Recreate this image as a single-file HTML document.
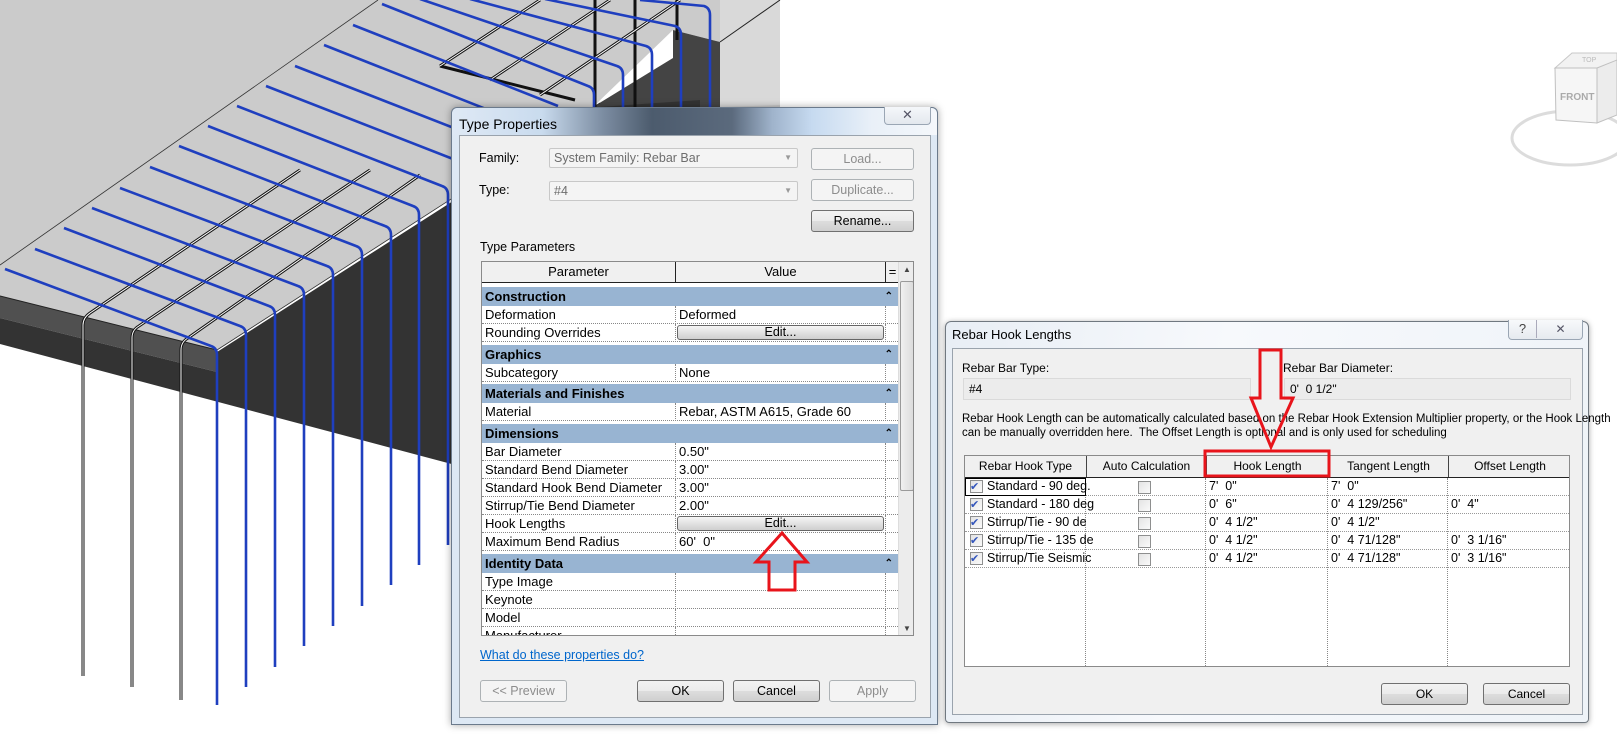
<!DOCTYPE html>
<html><head><meta charset="utf-8">
<style>
*{margin:0;padding:0;box-sizing:border-box}
body{width:1617px;height:753px;overflow:hidden;background:#fff;position:relative;font-family:"Liberation Sans",sans-serif;color:#000}
.a{position:absolute}
.t{position:absolute;white-space:nowrap;font-size:12.5px;line-height:14px}
.btn{position:absolute;border:1px solid #707070;border-radius:3px;background:linear-gradient(#f2f2f2,#ebebeb 50%,#dddddd 51%,#cfcfcf);font-size:12.5px;text-align:center;white-space:nowrap}
.btn.dis{border-color:#adb2b5;background:#f4f4f4;color:#8d8d8d}
.combo{position:absolute;border:1px solid #c8c8c8;background:#f4f4f4;color:#6d6d6d;font-size:12.5px;padding-left:4px;border-radius:2px}
.row{position:absolute;left:0;width:416px;height:18px;background:#fff;border-bottom:1px dotted #888;font-size:13px;line-height:17px}
.row span{position:absolute;left:3px}
.row b{position:absolute;left:197px;font-weight:normal}
.row i{position:absolute;left:193px;top:0;height:18px;border-left:1px dotted #888}
.row u{position:absolute;left:403px;top:0;height:18px;border-left:1px dotted #888}
.grp{position:absolute;left:0;width:416px;height:19px;background:#98b4d2;font-size:13px;font-weight:bold;line-height:19px;padding-left:3px}
.grp em{position:absolute;right:5px;font-style:normal;font-size:10px;font-weight:bold}
.ed{position:absolute;left:195px;top:1px;width:207px;height:15px;border:1px solid #666;border-radius:3px;background:linear-gradient(#f6f6f6,#e2e2e2 50%,#cfcfcf);text-align:center;font-size:12.5px;line-height:13px}
.hr{position:absolute;left:0;width:606px;height:18px;font-size:12.5px;line-height:17px;border-bottom:1px dotted #999}
.hr span{position:absolute}
.cb{position:absolute;width:13px;height:13px;border:1px solid #8e8f8f;background:linear-gradient(135deg,#e4e4e4,#fafafa)}
</style></head><body>

<svg class="a" style="left:0;top:0" width="1617" height="753">
 <polygon points="0,0 780,0 780,110 720,110 720,42 673,30 593,107 217,350 0,296" fill="#cbcbcb"/>
 <polygon points="720,0 780,0 780,105 720,107" fill="#d9d9d9"/>
 <line x1="720" y1="42" x2="780" y2="0" stroke="#222" stroke-width="1"/>
 <line x1="0" y1="265" x2="378" y2="0" stroke="#333" stroke-width="0.8"/>
 <polygon points="593,107 673,58 673,30 720,42 720,107" fill="#444"/>
 <polygon points="0,296 217,350 217,372 0,318" fill="#505050"/>
 <polygon points="0,318 217,372 217,352 600,107 700,100 700,530 0,344" fill="#333"/>
 <line x1="0" y1="296" x2="217" y2="350" stroke="#222"/>
 <line x1="217" y1="350" x2="600" y2="103" stroke="#333" stroke-width="0.8"/>
 <g stroke="#111" stroke-width="3" fill="none">
  <path d="M83,676 V325 Q83,318 90,313 L300,170"/>
  <path d="M132,687 V338 Q132,330 139,326 L370,170"/>
  <path d="M181,700 V350 Q181,342 188,338 L420,175"/>
  <path d="M595,0 V110 M635,0 V110 M677,0 V40"/>
  <path d="M440,66 L540,0 M490,80 L610,0 M540,95 L680,0"/>
  <path d="M440,66 L575,100"/>
 </g>
 <g stroke="#fff" stroke-width="1" fill="none">
  <path d="M83,676 V325 Q83,318 90,313 L300,170"/>
  <path d="M132,687 V338 Q132,330 139,326 L370,170"/>
  <path d="M181,700 V350 Q181,342 188,338 L420,175"/>
  <path d="M440,66 L540,0 M490,80 L610,0 M540,95 L680,0"/>
 </g>
 <g stroke="#1f3fbf" stroke-width="2.6" fill="none">
  <path d="M5,269 L211,346 Q217,348 217,355 V705"/>
  <path d="M35,249 L240,326 Q246,328 246,335 V687"/>
  <path d="M64,228 L269,306 Q275,308 275,315 V667"/>
  <path d="M92,208 L298,286 Q304,288 304,295 V646"/>
  <path d="M120,188 L327,266 Q333,268 333,275 V626"/>
  <path d="M150,167 L356,246 Q362,248 362,255 V606"/>
  <path d="M179,146 L385,226 Q391,228 391,235 V585"/>
  <path d="M208,126 L413,206 Q419,208 419,215 V565"/>
  <path d="M237,106 L442,186 Q448,188 448,195 V545"/>
  <path d="M266,86 L471,166"/>
  <path d="M295,66 L500,146"/>
  <path d="M324,45 L529,126"/>
  <path d="M353,25 L558,106"/>
  <path d="M382,4 L588,86 Q594,88 594,95 V120"/>
  <path d="M420,-1 L617,66 Q623,68 623,75 V120"/>
  <path d="M470,-1 L646,46 Q652,48 652,55 V120"/>
  <path d="M545,-1 L675,26 Q681,28 681,35 V120"/>
  <path d="M640,0 L704,6 Q710,8 710,15 V120"/>
 </g>
 <g stroke="#dcdcdc" fill="none" stroke-width="3">
  <ellipse cx="1570" cy="138" rx="58" ry="27"/>
 </g>
 <polygon points="1555,68 1572,53 1617,53 1617,68 1597,68" fill="#f2f2f2" stroke="#c8c8c8"/>
 <polygon points="1555,68 1597,68 1597,123 1556,120" fill="#f6f6f6" stroke="#c0c0c0"/>
 <polygon points="1597,68 1617,60 1617,115 1597,123" fill="#ececec" stroke="#c0c0c0"/>
 <text x="1560" y="100" font-family="Liberation Sans" font-size="10" font-weight="bold" fill="#aaa">FRONT</text>
 <text x="1582" y="62" font-family="Liberation Sans" font-size="7" fill="#bbb">TOP</text>
</svg>

<div class="a" style="left:451px;top:107px;width:487px;height:618px;border:1px solid #6b7a8c;border-radius:6px 6px 0 0;background:#dde8f4;box-shadow:0 0 8px rgba(0,0,0,.35)"></div>
<div class="a" style="left:452px;top:108px;width:485px;height:27px;border-radius:6px 6px 0 0;background:linear-gradient(90deg,#dfe9f5 0,#c9dbee 90px,#7d8ea3 150px,#4c5b6d 200px,#5b6a7d 280px,#9fb3cb 320px,#c6daf0 360px,#e9f0f8 420px,#f4f7fb 485px)"></div>
<div class="t" style="left:459px;top:116px;font-size:14px;line-height:16px">Type Properties</div>
<div class="a" style="left:884px;top:107px;width:47px;height:18px;border:1px solid #9aa6b4;border-top:none;border-radius:0 0 4px 4px;background:linear-gradient(#f5f7fa,#e3e8ee);text-align:center;font-size:13px;line-height:16px;color:#556">✕</div>
<div class="a" style="left:459px;top:135px;width:472px;height:583px;background:#f0f0f0;border:1px solid #9aa3ad"></div>

<div class="t" style="left:479px;top:151px">Family:</div>
<div class="combo" style="left:549px;top:148px;width:249px;height:20px;line-height:18px">System Family: Rebar Bar<span style="position:absolute;right:5px;top:0;font-size:8px;color:#999">▼</span></div>
<div class="t" style="left:479px;top:183px">Type:</div>
<div class="combo" style="left:549px;top:181px;width:249px;height:20px;line-height:18px">#4<span style="position:absolute;right:5px;top:0;font-size:8px;color:#999">▼</span></div>
<div class="btn dis" style="left:811px;top:148px;width:103px;height:22px;line-height:20px">Load...</div>
<div class="btn dis" style="left:811px;top:179px;width:103px;height:22px;line-height:20px">Duplicate...</div>
<div class="btn" style="left:811px;top:210px;width:103px;height:22px;line-height:20px">Rename...</div>
<div class="t" style="left:480px;top:240px">Type Parameters</div>

<div class="a" style="left:481px;top:261px;width:433px;height:375px;border:1px solid #8a8a8a;background:#fff;overflow:hidden">
 <div class="a" style="left:0;top:0;width:416px;height:21px;background:#f0f0f0;border-bottom:1px solid #222;font-size:13px;line-height:20px">
  <div class="a" style="left:0;width:193px;text-align:center">Parameter</div>
  <div class="a" style="left:193px;width:211px;height:20px;text-align:center;border-left:1px solid #222;border-right:1px solid #222">Value</div>
  <div class="a" style="left:405px;width:11px;text-align:center">=</div>
 </div>
 <div class="grp" style="top:25px">Construction<em>⌃</em></div>
 <div class="row" style="top:44px"><span>Deformation</span><i></i><b>Deformed</b><u></u></div>
 <div class="row" style="top:62px"><span>Rounding Overrides</span><i></i><div class="ed">Edit...</div><u></u></div>
 <div class="grp" style="top:83px">Graphics<em>⌃</em></div>
 <div class="row" style="top:102px"><span>Subcategory</span><i></i><b>None</b><u></u></div>
 <div class="grp" style="top:122px">Materials and Finishes<em>⌃</em></div>
 <div class="row" style="top:141px"><span>Material</span><i></i><b>Rebar, ASTM A615, Grade 60</b><u></u></div>
 <div class="grp" style="top:162px">Dimensions<em>⌃</em></div>
 <div class="row" style="top:181px"><span>Bar Diameter</span><i></i><b>0.50"</b><u></u></div>
 <div class="row" style="top:199px"><span>Standard Bend Diameter</span><i></i><b>3.00"</b><u></u></div>
 <div class="row" style="top:217px"><span>Standard Hook Bend Diameter</span><i></i><b>3.00"</b><u></u></div>
 <div class="row" style="top:235px"><span>Stirrup/Tie Bend Diameter</span><i></i><b>2.00"</b><u></u></div>
 <div class="row" style="top:253px"><span>Hook Lengths</span><i></i><div class="ed">Edit...</div><u></u></div>
 <div class="row" style="top:271px"><span>Maximum Bend Radius</span><i></i><b>60'&nbsp; 0"</b><u></u></div>
 <div class="grp" style="top:292px">Identity Data<em>⌃</em></div>
 <div class="row" style="top:311px"><span>Type Image</span><i></i><u></u></div>
 <div class="row" style="top:329px"><span>Keynote</span><i></i><u></u></div>
 <div class="row" style="top:347px"><span>Model</span><i></i><u></u></div>
 <div class="row" style="top:365px"><span>Manufacturer</span><i></i><u></u></div>
 <div class="a" style="left:416px;top:0;width:17px;height:375px;background:#ececec;border-left:1px solid #ddd">
  <div class="a" style="left:4px;top:3px;font-size:8px;color:#444">▲</div>
  <div class="a" style="left:1px;top:19px;width:14px;height:210px;border:1px solid #9a9a9a;border-radius:2px;background:linear-gradient(90deg,#f0f0f0,#dcdcdc)"></div>
  <div class="a" style="left:4px;top:362px;font-size:8px;color:#444">▼</div>
 </div>
</div>

<div class="t" style="left:480px;top:648px;color:#0066cc;text-decoration:underline;font-size:12.5px">What do these properties do?</div>
<div class="btn dis" style="left:480px;top:680px;width:87px;height:22px;line-height:20px">&lt;&lt; Preview</div>
<div class="btn" style="left:637px;top:680px;width:87px;height:22px;line-height:20px">OK</div>
<div class="btn" style="left:733px;top:680px;width:87px;height:22px;line-height:20px">Cancel</div>
<div class="btn dis" style="left:829px;top:680px;width:87px;height:22px;line-height:20px">Apply</div>

<svg class="a" style="left:0;top:0" width="1617" height="753">
 <polygon points="782,533 807,562 795,562 795,590 769,590 769,562 756,562" fill="none" stroke="#e8141b" stroke-width="3"/>
</svg>

<div class="a" style="left:945px;top:321px;width:644px;height:402px;border:1px solid #707880;border-radius:6px 6px 4px 4px;background:linear-gradient(100deg,#e8eef5,#f7f9fc 40%,#eef3f8);box-shadow:0 1px 6px rgba(0,0,0,.35)"></div>
<div class="t" style="left:952px;top:327px;font-size:13px;line-height:16px">Rebar Hook Lengths</div>
<div class="a" style="left:1508px;top:320px;width:75px;height:20px;border:1px solid #9aa6b4;border-top:none;border-radius:0 0 4px 4px;background:linear-gradient(#f7f9fb,#e6eaef)">
 <div class="a" style="left:0;width:28px;text-align:center;font-size:13px;line-height:18px;color:#444;border-right:1px solid #aab">?</div>
 <div class="a" style="left:28px;width:47px;text-align:center;font-size:12px;line-height:18px;color:#556">✕</div>
</div>
<div class="a" style="left:952px;top:348px;width:631px;height:367px;background:#f0f0f0;border:1px solid #9aa3ad"></div>
<div class="t" style="left:962px;top:361px;font-size:12px">Rebar Bar Type:</div>
<div class="a" style="left:963px;top:378px;width:288px;height:22px;border:1px solid #dadada;background:#ececec;font-size:12px;line-height:20px;padding-left:5px">#4</div>
<div class="t" style="left:1283px;top:361px;font-size:12px">Rebar Bar Diameter:</div>
<div class="a" style="left:1284px;top:378px;width:287px;height:22px;border:1px solid #dadada;background:#ececec;font-size:12px;line-height:20px;padding-left:5px">0'&nbsp; 0 1/2"</div>
<div class="t" style="left:962px;top:412px;font-size:11.5px">Rebar Hook Length can be automatically calculated based on the Rebar Hook Extension Multiplier property, or the Hook Length</div>
<div class="t" style="left:962px;top:426px;font-size:11.5px">can be manually overridden here.&nbsp; The Offset Length is optional and is only used for scheduling</div>

<div class="a" style="left:964px;top:455px;width:606px;height:212px;border:1px solid #8a8a8a;background:#fff;overflow:hidden">
 <div class="a" style="left:0;top:0;width:606px;height:22px;background:#f0f0f0;border-bottom:1px solid #222;font-size:12px;line-height:21px">
  <div class="a" style="left:0;width:121px;text-align:center">Rebar Hook Type</div>
  <div class="a" style="left:121px;width:120px;height:21px;text-align:center;border-left:1px solid #444">Auto Calculation</div>
  <div class="a" style="left:241px;width:122px;height:21px;text-align:center;border-left:1px solid #444">Hook Length</div>
  <div class="a" style="left:363px;width:120px;height:21px;text-align:center;border-left:1px solid #444">Tangent Length</div>
  <div class="a" style="left:483px;width:123px;height:21px;text-align:center;border-left:1px solid #444">Offset Length</div>
 </div>
 <div class="a" style="left:120px;top:22px;height:190px;border-left:1px dotted #888"></div>
 <div class="a" style="left:240px;top:22px;height:190px;border-left:1px dotted #888"></div>
 <div class="a" style="left:362px;top:22px;height:190px;border-left:1px dotted #888"></div>
 <div class="a" style="left:482px;top:22px;height:190px;border-left:1px dotted #888"></div>
 <div class="a" style="left:0;top:210px;width:606px;border-top:1px dotted #888"></div>
 <div class="hr" style="top:22px"><div class="a" style="left:0;top:0;width:121px;height:18px;border:1px solid #000"></div><div class="cb" style="left:5px;top:2px"></div><span style="left:5px;top:1px;color:#3355bb;font-size:11px">✔</span><span style="left:22px">Standard - 90 deg.</span><div class="cb" style="left:173px;top:3px"></div><span style="left:244px">7'&nbsp; 0"</span><span style="left:366px">7'&nbsp; 0"</span></div>
 <div class="hr" style="top:40px"><div class="cb" style="left:5px;top:2px"></div><span style="left:5px;top:1px;color:#3355bb;font-size:11px">✔</span><span style="left:22px">Standard - 180 deg</span><div class="cb" style="left:173px;top:3px"></div><span style="left:244px">0'&nbsp; 6"</span><span style="left:366px">0'&nbsp; 4 129/256"</span><span style="left:486px">0'&nbsp; 4"</span></div>
 <div class="hr" style="top:58px"><div class="cb" style="left:5px;top:2px"></div><span style="left:5px;top:1px;color:#3355bb;font-size:11px">✔</span><span style="left:22px">Stirrup/Tie - 90 de</span><div class="cb" style="left:173px;top:3px"></div><span style="left:244px">0'&nbsp; 4 1/2"</span><span style="left:366px">0'&nbsp; 4 1/2"</span></div>
 <div class="hr" style="top:76px"><div class="cb" style="left:5px;top:2px"></div><span style="left:5px;top:1px;color:#3355bb;font-size:11px">✔</span><span style="left:22px">Stirrup/Tie - 135 de</span><div class="cb" style="left:173px;top:3px"></div><span style="left:244px">0'&nbsp; 4 1/2"</span><span style="left:366px">0'&nbsp; 4 71/128"</span><span style="left:486px">0'&nbsp; 3 1/16"</span></div>
 <div class="hr" style="top:94px"><div class="cb" style="left:5px;top:2px"></div><span style="left:5px;top:1px;color:#3355bb;font-size:11px">✔</span><span style="left:22px">Stirrup/Tie Seismic</span><div class="cb" style="left:173px;top:3px"></div><span style="left:244px">0'&nbsp; 4 1/2"</span><span style="left:366px">0'&nbsp; 4 71/128"</span><span style="left:486px">0'&nbsp; 3 1/16"</span></div>
</div>
<div class="btn" style="left:1381px;top:683px;width:87px;height:22px;line-height:20px;font-size:12px">OK</div>
<div class="btn" style="left:1483px;top:683px;width:87px;height:22px;line-height:20px;font-size:12px">Cancel</div>

<svg class="a" style="left:0;top:0" width="1617" height="753">
 <rect x="1205" y="451" width="124" height="25" fill="none" stroke="#e8141b" stroke-width="3"/>
 <polygon points="1260,350 1281,350 1281,398 1293,398 1271,447 1251,398 1260,398" fill="none" stroke="#e8141b" stroke-width="3"/>
</svg>
</body></html>
